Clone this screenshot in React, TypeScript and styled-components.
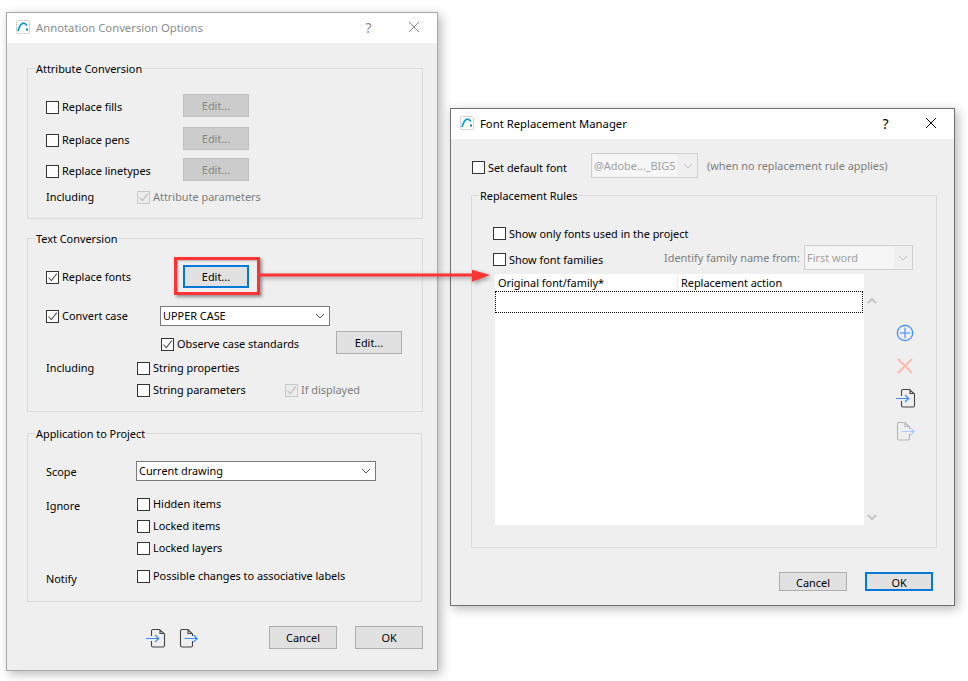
import React from "react";
import styled, { createGlobalStyle } from "styled-components";

const GlobalStyle = createGlobalStyle`
  html, body {
    margin: 0;
    padding: 0;
    background: #fff;
  }
  body {
    font-family: "Noto Sans", "Open Sans", sans-serif;
    font-size: 10.9px;
    color: #000;
  }
  * {
    box-sizing: border-box;
  }
`;

const Page = styled.div`
  position: relative;
  width: 968px;
  height: 681px;
  overflow: hidden;
  background: #fff;
`;

const Window = styled.div<{ $x: number; $y: number; $w: number; $h: number; $active?: boolean }>`
  position: absolute;
  left: ${(p) => p.$x}px;
  top: ${(p) => p.$y}px;
  width: ${(p) => p.$w}px;
  height: ${(p) => p.$h}px;
  display: flex;
  flex-direction: column;
  background: #efefef;
  border: 1px solid ${(p) => (p.$active ? "#707070" : "#a8a8a8")};
  box-shadow: 3px 3px 10px rgba(0, 0, 0, 0.28);
`;

const TitleBar = styled.div<{ $active?: boolean }>`
  height: 30px;
  flex: none;
  display: flex;
  align-items: center;
  padding: 0 0 2px 9px;
  background: #fff;
  font-size: 11.3px;
  color: ${(p) => (p.$active ? "#000" : "#8c8c8c")};
`;

const TitleText = styled.span`
  margin-left: 6px;
  flex: 1;
  white-space: nowrap;
`;

const TitleButton = styled.span<{ $active?: boolean; $w: number }>`
  width: ${(p) => p.$w}px;
  flex: none;
  display: flex;
  align-items: center;
  justify-content: center;
  font-size: 14px;
  color: ${(p) => (p.$active ? "#000" : "#8c8c8c")};
`;

const Body = styled.div<{ $pad: string }>`
  flex: 1;
  display: flex;
  flex-direction: column;
  padding: ${(p) => p.$pad};
`;

const Group = styled.div<{ $h: number; $mt?: number; $pad: string; $mr?: number }>`
  position: relative;
  height: ${(p) => p.$h}px;
  margin-top: ${(p) => p.$mt ?? 0}px;
  margin-right: ${(p) => p.$mr ?? 0}px;
  padding: ${(p) => p.$pad};
  border: 1px solid #dadada;
  flex: none;
`;

const Legend = styled.span`
  position: absolute;
  left: 7px;
  top: -8px;
  height: 16px;
  line-height: 16px;
  padding: 0 1px;
  background: #efefef;
  white-space: nowrap;
`;

const Row = styled.div<{ $h: number; $mt?: number; $ml?: number }>`
  display: flex;
  align-items: center;
  height: ${(p) => p.$h}px;
  margin-top: ${(p) => p.$mt ?? 0}px;
  margin-left: ${(p) => p.$ml ?? 0}px;
`;

const Label = styled.span<{ $w: number; $drop?: number; $dim?: boolean; $flat?: boolean }>`
  width: ${(p) => p.$w}px;
  flex: none;
  padding-top: ${(p) => p.$drop ?? 0}px;
  padding-bottom: ${(p) => (p.$flat ? 0 : 2)}px;
  white-space: nowrap;
  color: ${(p) => (p.$dim ? "#7d7d7d" : "#000")};
`;

const CheckRow = styled.span<{ $w?: number; $shift?: number }>`
  display: inline-flex;
  align-items: center;
  width: ${(p) => (p.$w ? `${p.$w}px` : "auto")};
  flex: none;
  margin-top: ${(p) => p.$shift ?? 0}px;
  white-space: nowrap;
`;

const Box = styled.span<{ $disabled?: boolean }>`
  width: 13px;
  height: 13px;
  flex: none;
  display: inline-flex;
  align-items: center;
  justify-content: center;
  margin-right: 3px;
  background: ${(p) => (p.$disabled ? "#ececec" : "#fff")};
  border: 1px solid ${(p) => (p.$disabled ? "#c8c8c8" : "#333")};
`;

const CheckText = styled.span<{ $disabled?: boolean; $flat?: boolean }>`
  padding-bottom: ${(p) => (p.$flat ? 0 : 2)}px;
  color: ${(p) => (p.$disabled ? "#7d7d7d" : "#000")};
`;

const Button = styled.span<{ $w?: number; $h?: number; $disabled?: boolean; $focus?: boolean }>`
  width: ${(p) => p.$w ?? 68}px;
  height: ${(p) => p.$h ?? 23}px;
  flex: none;
  display: inline-flex;
  align-items: center;
  justify-content: center;
  padding: ${(p) => (p.$h === 19 ? "1px 0 0" : "0 0 1px")};
  background: ${(p) => (p.$disabled ? "#cccccc" : "#e1e1e1")};
  border: ${(p) =>
    p.$focus ? "2px solid #0078d7" : `1px solid ${p.$disabled ? "#bfbfbf" : "#adadad"}`};
  color: ${(p) => (p.$disabled ? "#838383" : "#000")};
`;

const Select = styled.span<{ $w: number }>`
  width: ${(p) => p.$w}px;
  height: 20px;
  flex: none;
  display: flex;
  align-items: center;
  justify-content: space-between;
  padding: 0 4px 0 2px;
  background: #fff;
  border: 1px solid #7a7a7a;
  white-space: nowrap;
`;

const SelectText = styled.span`
  padding-bottom: 2px;
`;

const DisabledSelect = styled.span<{ $w: number }>`
  width: ${(p) => p.$w}px;
  height: 25px;
  flex: none;
  display: flex;
  align-items: center;
  justify-content: space-between;
  padding: 1px 4px 1px 1px;
  background: #efefef;
  border: 1px solid #cfcfcf;
  color: #a0a0a0;
  white-space: nowrap;
`;

const DisabledValue = styled.span<{ $w: number }>`
  width: ${(p) => p.$w}px;
  height: 100%;
  display: flex;
  align-items: center;
  padding: 0 0 1px 1px;
  background: #f6f6f6;
`;

const Footer = styled.div<{ $mt: number; $ml?: number; $mr?: number }>`
  display: flex;
  align-items: center;
  margin-top: ${(p) => p.$mt}px;
  margin-left: ${(p) => p.$ml ?? 0}px;
  margin-right: ${(p) => p.$mr ?? 0}px;
`;

const IconSlot = styled.span<{ $ml?: number; $mt?: number }>`
  display: block;
  width: 20px;
  height: 20px;
  flex: none;
  margin-left: ${(p) => p.$ml ?? 0}px;
  margin-top: ${(p) => p.$mt ?? 0}px;
`;

const FooterButtons = styled.div`
  margin-left: auto;
  display: flex;
  gap: 18px;
`;

const Note = styled.span`
  margin-left: 9px;
  color: #7d7d7d;
  white-space: nowrap;
`;

const RulesArea = styled.div`
  display: flex;
  margin: 4px 0 0 2px;
  height: 251px;
`;

const Table = styled.div`
  width: 369px;
  flex: none;
  background: #fff;
`;

const TableHead = styled.div`
  display: grid;
  grid-template-columns: 183px 1fr;
  height: 17px;
`;

const HeadCell = styled.span<{ $divider?: boolean }>`
  display: flex;
  align-items: center;
  padding-left: 3px;
  border-right: ${(p) => (p.$divider ? "1px solid #eeeeee" : "none")};
  white-space: nowrap;
`;

const SelectedRow = styled.div`
  width: 368px;
  height: 22px;
  border: 1px dotted #000;
`;

const ScrollColumn = styled.div`
  width: 16px;
  flex: none;
  display: flex;
  flex-direction: column;
  justify-content: space-between;
  align-items: center;
  padding: 23px 0 4px;
`;

const ToolColumn = styled.div`
  margin-left: 16px;
  padding-top: 49px;
  display: flex;
  flex-direction: column;
`;

const Highlight = styled.div`
  position: absolute;
  left: 174px;
  top: 257px;
  width: 86px;
  height: 38px;
  border: 3px solid #ff3333;
  box-shadow: 2px 2px 3px rgba(0, 0, 0, 0.4), inset 1px 1px 2px rgba(0, 0, 0, 0.25);
`;

const ArrowOverlay = styled.svg`
  position: absolute;
  left: 259px;
  top: 266px;
  filter: drop-shadow(2px 2px 2px rgba(0, 0, 0, 0.35));
`;

const Tick = ({ color = "#555" }: { color?: string }) => (
  <svg width="11" height="11" viewBox="0 0 11 11">
    <path d="M1.5 5.5 L4.3 8.6 L9.8 1.6" fill="none" stroke={color} strokeWidth="1.1" />
  </svg>
);

const Check = ({
  text,
  checked,
  disabled,
  w,
  shift,
  flat,
}: {
  text: string;
  checked?: boolean;
  disabled?: boolean;
  w?: number;
  shift?: number;
  flat?: boolean;
}) => (
  <CheckRow $w={w} $shift={shift}>
    <Box $disabled={disabled}>{checked && <Tick color={disabled ? "#bdbdbd" : "#555"} />}</Box>
    <CheckText $disabled={disabled} $flat={flat}>{text}</CheckText>
  </CheckRow>
);

const Chevron = ({ color = "#555" }: { color?: string }) => (
  <svg width="10" height="6" viewBox="0 0 10 6">
    <path d="M1 1 L5 5 L9 1" fill="none" stroke={color} strokeWidth="1" />
  </svg>
);

const Logo = () => (
  <svg width="14" height="14" viewBox="0 0 14 14">
    <rect x="0.5" y="0.5" width="13" height="13" rx="1.5" fill="#fff" stroke="#d4d4d4" />
    <path d="M2 11 C3.5 6 5 3.2 7.5 3.2 C9.2 3.2 10 4.2 10.8 5.6" fill="none" stroke="#0f9fc9" strokeWidth="1.8" />
    <rect x="10" y="8.5" width="2" height="2" fill="#0f7fa9" />
  </svg>
);

const CloseIcon = ({ color }: { color: string }) => (
  <svg width="12" height="12" viewBox="0 0 12 12">
    <path d="M1 1 L11 11 M11 1 L1 11" fill="none" stroke={color} strokeWidth="1" />
  </svg>
);

const FileImport = ({ faded }: { faded?: boolean }) => (
  <svg width="20" height="20" viewBox="0 0 20 20">
    <path
      d="M5.5 8 V3 Q5.5 1.5 7 1.5 H13.5 L18.5 6 V17.5 Q18.5 19 17 19 H7 Q5.5 19 5.5 17.5 V13 M14 1.5 V5.5 H18.5"
      fill="none"
      stroke={faded ? "#b5b5b5" : "#444"}
      strokeWidth="1.1"
    />
    <path d="M0 10.5 H12.5 M9 7 L12.7 10.5 L9 14" fill="none" stroke={faded ? "#a9ccff" : "#3b8bff"} strokeWidth="1.2" />
  </svg>
);

const FileExport = ({ faded }: { faded?: boolean }) => (
  <svg width="20" height="20" viewBox="0 0 20 20">
    <path
      d="M13.5 8 V6 L9 1.5 H3 Q1.5 1.5 1.5 3 V17.5 Q1.5 19 3 19 H12 Q13.5 19 13.5 17.5 V13 M9 1.5 V5.5 H13.5"
      fill="none"
      stroke={faded ? "#b5b5b5" : "#444"}
      strokeWidth="1.1"
    />
    <path d="M5.5 10.5 H18 M14.5 7 L18.2 10.5 L14.5 14" fill="none" stroke={faded ? "#a9ccff" : "#3b8bff"} strokeWidth="1.2" />
  </svg>
);

const AddIcon = () => (
  <svg width="20" height="20" viewBox="0 0 20 20">
    <circle cx="9" cy="10" r="7.7" fill="none" stroke="#3b8bff" strokeWidth="1.2" />
    <path d="M3.5 10 H14.5 M9 4.5 V15.5" fill="none" stroke="#3b8bff" strokeWidth="1.1" />
  </svg>
);

const RemoveIcon = () => (
  <svg width="20" height="20" viewBox="0 0 20 20">
    <path d="M2 3 L16 17 M16 3 L2 17" fill="none" stroke="#fdb9ab" strokeWidth="1.8" />
  </svg>
);

const ScrollUp = () => (
  <svg width="10" height="7" viewBox="0 0 10 7">
    <path d="M1 6 L5 2 L9 6" fill="none" stroke="#c4c4c4" strokeWidth="2" />
  </svg>
);

const ScrollDown = () => (
  <svg width="10" height="7" viewBox="0 0 10 7">
    <path d="M1 1 L5 5 L9 1" fill="none" stroke="#c4c4c4" strokeWidth="2" />
  </svg>
);

const App: React.FC = () => (
  <Page>
    <GlobalStyle />

    <Window $x={6} $y={12} $w={432} $h={659}>
      <TitleBar>
        <Logo />
        <TitleText>Annotation Conversion Options</TitleText>
        <TitleButton $w={45}>?</TitleButton>
        <TitleButton $w={45}>
          <CloseIcon color="#8c8c8c" />
        </TitleButton>
        <TitleButton $w={1} />
      </TitleBar>
      <Body $pad="25px 14px 0 20px">
        <Group $h={151} $pad="25px 0 0 18px">
          <Legend>Attribute Conversion</Legend>
          <Row $h={23}>
            <Check text="Replace fills" w={137} shift={3} />
            <Button $w={66} $disabled>Edit...</Button>
          </Row>
          <Row $h={23} $mt={10}>
            <Check text="Replace pens" w={137} shift={3} />
            <Button $w={66} $disabled>Edit...</Button>
          </Row>
          <Row $h={23} $mt={8}>
            <Check text="Replace linetypes" w={137} shift={3} />
            <Button $w={66} $disabled>Edit...</Button>
          </Row>
          <Row $h={18} $mt={7}>
            <Label $w={91}>Including</Label>
            <Check text="Attribute parameters" checked disabled />
          </Row>
        </Group>

        <Group $h={174} $mt={19} $pad="26px 0 0 18px">
          <Legend>Text Conversion</Legend>
          <Row $h={23}>
            <Check text="Replace fonts" checked w={137} shift={1} />
            <Button $w={66} $focus>Edit...</Button>
          </Row>
          <Row $h={20} $mt={18}>
            <Check text="Convert case" checked w={114} />
            <Select $w={170}>
              <SelectText>UPPER CASE</SelectText>
              <Chevron />
            </Select>
          </Row>
          <Row $h={23} $mt={5} $ml={115}>
            <Check text="Observe case standards" checked w={175} shift={3} />
            <Button $w={66}>Edit...</Button>
          </Row>
          <Row $h={18} $mt={5}>
            <Label $w={91}>Including</Label>
            <Check text="String properties" />
          </Row>
          <Row $h={18} $mt={4} $ml={91}>
            <Check text="String parameters" w={148} />
            <Check text="If displayed" checked disabled />
          </Row>
        </Group>

        <Group $h={169} $mt={21} $mr={1} $pad="27px 0 0 18px">
          <Legend>Application to Project</Legend>
          <Row $h={20}>
            <Label $w={90} $drop={2}>Scope</Label>
            <Select $w={240}>
              <SelectText>Current drawing</SelectText>
              <Chevron />
            </Select>
          </Row>
          <Row $h={18} $mt={14}>
            <Label $w={91} $drop={4}>Ignore</Label>
            <Check text="Hidden items" />
          </Row>
          <Row $h={18} $mt={4} $ml={91}>
            <Check text="Locked items" />
          </Row>
          <Row $h={18} $mt={4} $ml={91}>
            <Check text="Locked layers" />
          </Row>
          <Row $h={18} $mt={10}>
            <Label $w={91} $drop={6}>Notify</Label>
            <Check text="Possible changes to associative labels" />
          </Row>
        </Group>

        <Footer $mt={24} $ml={119}>
          <IconSlot>
            <FileImport />
          </IconSlot>
          <IconSlot $ml={13}>
            <FileExport />
          </IconSlot>
          <FooterButtons>
            <Button>Cancel</Button>
            <Button>OK</Button>
          </FooterButtons>
        </Footer>
      </Body>
    </Window>

    <Window $x={450} $y={108} $w={505} $h={498} $active>
      <TitleBar $active>
        <Logo />
        <TitleText>Font Replacement Manager</TitleText>
        <TitleButton $active $w={45}>?</TitleButton>
        <TitleButton $active $w={45}>
          <CloseIcon color="#000" />
        </TitleButton>
        <TitleButton $w={1} />
      </TitleBar>
      <Body $pad="14px 17px 0 20px">
        <Row $h={25} $ml={1}>
          <Check text="Set default font" w={119} shift={3} flat />
          <DisabledSelect $w={107}>
            <DisabledValue $w={84}>@Adobe..._BIG5</DisabledValue>
            <Chevron color="#c0c0c0" />
          </DisabledSelect>
          <Note>(when no replacement rule applies)</Note>
        </Row>

        <Group $h={353} $mt={17} $pad="28px 0 0 21px">
          <Legend>Replacement Rules</Legend>
          <Row $h={18}>
            <Check text="Show only fonts used in the project" flat />
          </Row>
          <Row $h={25} $mt={3}>
            <Check text="Show font families" w={171} shift={3} flat />
            <Label $w={140} $dim $flat>Identify family name from:</Label>
            <DisabledSelect $w={109}>
              <DisabledValue $w={88}>First word</DisabledValue>
              <Chevron color="#c0c0c0" />
            </DisabledSelect>
          </Row>
          <RulesArea>
            <Table>
              <TableHead>
                <HeadCell $divider>Original font/family*</HeadCell>
                <HeadCell>Replacement action</HeadCell>
              </TableHead>
              <SelectedRow />
            </Table>
            <ScrollColumn>
              <ScrollUp />
              <ScrollDown />
            </ScrollColumn>
            <ToolColumn>
              <IconSlot>
                <AddIcon />
              </IconSlot>
              <IconSlot $mt={13}>
                <RemoveIcon />
              </IconSlot>
              <IconSlot $mt={12}>
                <FileImport />
              </IconSlot>
              <IconSlot $mt={13}>
                <FileExport faded />
              </IconSlot>
            </ToolColumn>
          </RulesArea>
        </Group>

        <Footer $mt={24} $mr={4}>
          <FooterButtons>
            <Button $h={19}>Cancel</Button>
            <Button $h={19} $focus>OK</Button>
          </FooterButtons>
        </Footer>
      </Body>
    </Window>

    <Highlight />
    <ArrowOverlay width="240" height="20" viewBox="0 0 240 20">
      <path d="M0 7.5 H213 V3.8 L231 9 L213 15.8 V10.5 H0 Z" fill="#ff3333" />
    </ArrowOverlay>
  </Page>
);

export default App;
